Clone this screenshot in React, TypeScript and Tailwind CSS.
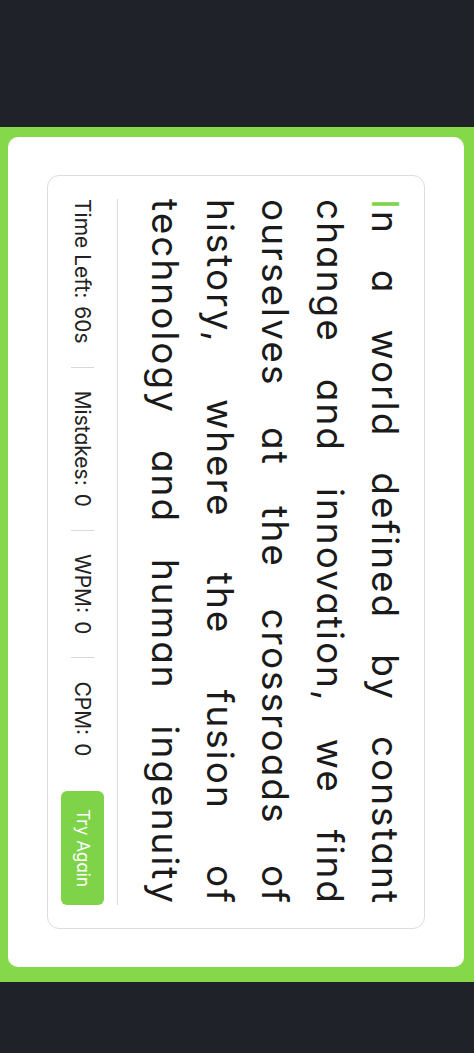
import React from "react";

const lines = [
  "In a world defined by constant",
  "change and innovation, we find",
  "ourselves at the crossroads of",
  "history, where the fusion of",
  "technology and human ingenuity",
];

function Stat({ label, value }: { label: string; value: string }) {
  return (
    <div className="flex items-center whitespace-nowrap">
      <span>{label}</span>
      <span className="ml-[8px]">{value}</span>
    </div>
  );
}

function Sep() {
  return <div className="w-px h-[23px] bg-[#d9d9d9]" />;
}

export default function App() {
  return (
    <div className="w-[474px] h-[1053px] overflow-hidden bg-[#1f2228]">
      <div className="w-[1053px] h-[474px] origin-top-left rotate-90 translate-x-[474px] flex bg-[#1f2228] font-['Inter',sans-serif] [font-feature-settings:'cv11']">
        <div className="w-[127px] shrink-0" />
        <div className="w-[855px] shrink-0 bg-[#84d84a] pl-[10px] pr-[15px] pt-[10px] pb-[8px]">
          <div className="w-full h-full bg-white rounded-[10px] px-[38px] py-[39px]">
            <div className="w-full h-full border border-[#dcdcdc] rounded-[12px] px-[23px] pt-[11px] flex flex-col">
              <div className="h-[275px] overflow-hidden text-[37px] tracking-[2px] leading-[55px] text-[#1a1a1a]">
                {lines.map((l, i) => (
                  <div key={i} className="text-justify [text-align-last:justify]">
                    {i === 0 ? (
                      <>
                        <span className="text-[#7ed348]">I</span>
                        {l.slice(1)}
                      </>
                    ) : (
                      l
                    )}
                  </div>
                ))}
              </div>
              <div className="mt-[20px] border-t border-[#dcdcdc] pt-[13px] flex items-center h-[57px] text-[21px] text-[#222]">
                <div className="flex items-center gap-[23px]">
                  <Stat label="Time Left:" value="60s" />
                  <Sep />
                  <Stat label="Mistakes:" value="0" />
                  <Sep />
                  <Stat label="WPM:" value="0" />
                  <Sep />
                  <Stat label="CPM:" value="0" />
                </div>
                <button className="ml-auto h-[43px] px-[18px] rounded-[6px] bg-[#7ed348] text-white text-[17px]">
                  Try Again
                </button>
              </div>
            </div>
          </div>
        </div>
        <div className="flex-1" />
      </div>
    </div>
  );
}
